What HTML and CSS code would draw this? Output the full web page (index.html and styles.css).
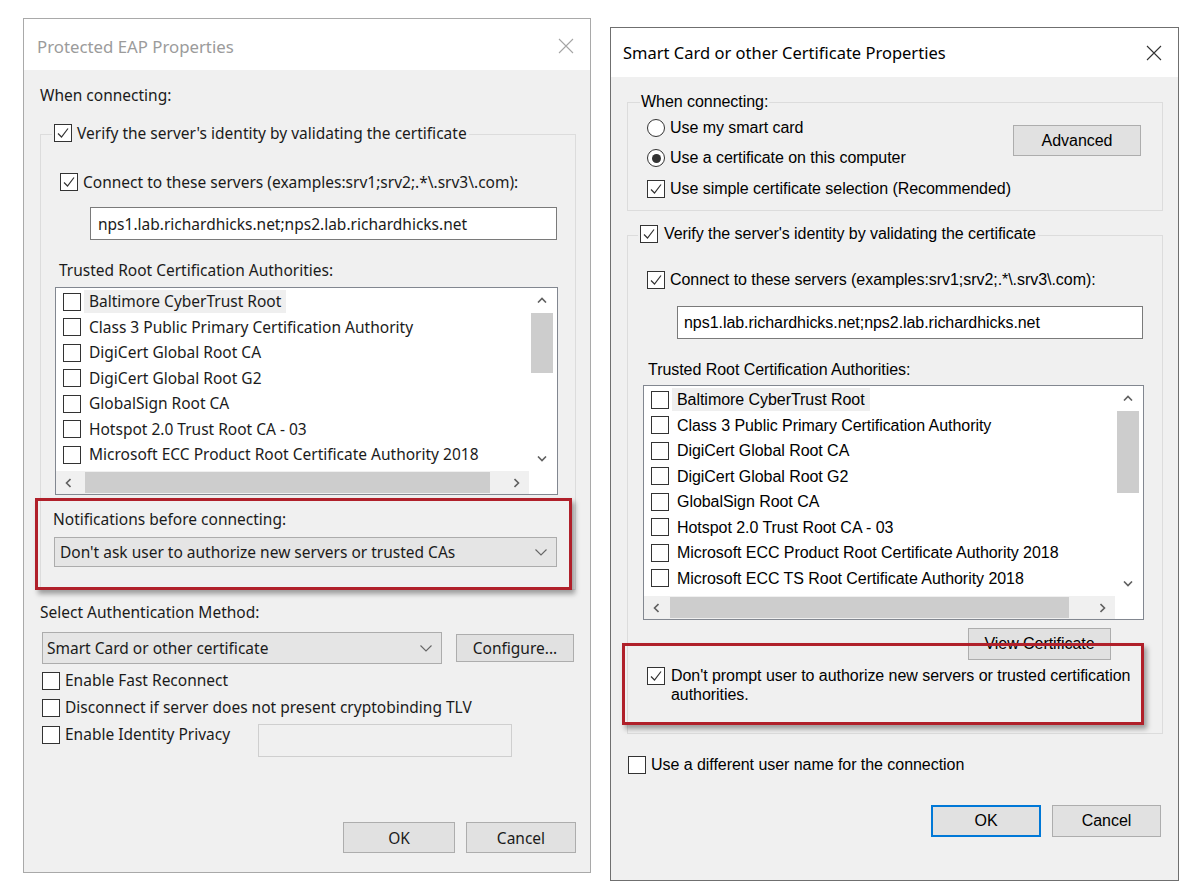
FILE: index.html
```html
<!DOCTYPE html>
<html lang="en">
  <head>
    <meta charset="UTF-8" />
    <title>PEAP and Smart Card Properties</title>
    <link rel="stylesheet" href="styles.css">
  </head>
  <body>
    <div class="page">
      <!-- Protected EAP Properties -->
      <div class="dialog peap">
        <div class="titlebar">
          <span class="title">Protected EAP Properties</span>
          <svg class="close" viewBox="0 0 16 16"><path d="M1 1L15 15M15 1L1 15"/></svg>
        </div>
        <div class="body">
          <div class="p-when">When connecting:</div>
          <div class="group p-group">
            <div class="check legend p-legend"><span class="cb"><svg viewBox="0 0 14 14"><path d="M2 7.5l3.5 3.5 6.5-8.5"/></svg></span>Verify the server's identity by validating the certificate</div>
            <div class="check p-connect"><span class="cb"><svg viewBox="0 0 14 14"><path d="M2 7.5l3.5 3.5 6.5-8.5"/></svg></span>Connect to these servers (examples:srv1;srv2;.*\.srv3\.com):</div>
            <div class="textbox p-servers">nps1.lab.richardhicks.net;nps2.lab.richardhicks.net</div>
            <div class="p-trusted">Trusted Root Certification Authorities:</div>
            <div class="listbox p-list">
              <div class="items">
                <div class="item sel"><span class="cb"></span><span class="txt">Baltimore CyberTrust Root</span></div>
                <div class="item"><span class="cb"></span><span class="txt">Class 3 Public Primary Certification Authority</span></div>
                <div class="item"><span class="cb"></span><span class="txt">DigiCert Global Root CA</span></div>
                <div class="item"><span class="cb"></span><span class="txt">DigiCert Global Root G2</span></div>
                <div class="item"><span class="cb"></span><span class="txt">GlobalSign Root CA</span></div>
                <div class="item"><span class="cb"></span><span class="txt">Hotspot 2.0 Trust Root CA - 03</span></div>
                <div class="item"><span class="cb"></span><span class="txt">Microsoft ECC Product Root Certificate Authority 2018</span></div>
              </div>
              <div class="vscroll">
                <span class="arrow"><svg viewBox="0 0 10 6"><path d="M1 5.5L5 1.5 9 5.5"/></svg></span>
                <span class="thumb"></span>
                <span class="fill"></span>
                <span class="arrow"><svg viewBox="0 0 10 6"><path d="M1 0.5L5 4.5 9 0.5"/></svg></span>
              </div>
              <div class="hscroll">
                <span class="arrow"><svg viewBox="0 0 6 10"><path d="M5.5 1L1.5 5 5.5 9"/></svg></span>
                <span class="thumb"></span>
                <span class="fill"></span>
                <span class="arrow"><svg viewBox="0 0 6 10"><path d="M0.5 1L4.5 5 0.5 9"/></svg></span>
              </div>
              <div class="corner"></div>
            </div>
            <div class="p-notify">Notifications before connecting:</div>
            <div class="select p-notify-select">
              <span>Don't ask user to authorize new servers or trusted CAs</span>
              <svg viewBox="0 0 12 7"><path d="M0.5 0.5L6 6 11.5 0.5"/></svg>
            </div>
          </div>
          <div class="p-method">Select Authentication Method:</div>
          <div class="p-method-row">
            <div class="select p-method-select">
              <span>Smart Card or other certificate</span>
              <svg viewBox="0 0 12 7"><path d="M0.5 0.5L6 6 11.5 0.5"/></svg>
            </div>
            <div class="btn p-configure">Configure...</div>
          </div>
          <div class="check p-opt"><span class="cb"></span>Enable Fast Reconnect</div>
          <div class="check p-opt"><span class="cb"></span>Disconnect if server does not present cryptobinding TLV</div>
          <div class="p-privacy">
            <div class="check p-opt p-privacy-label"><span class="cb"></span>Enable Identity Privacy</div>
            <div class="textbox disabled p-identity"></div>
          </div>
          <div class="footer p-footer">
            <div class="btn p-ok">OK</div>
            <div class="btn p-cancel">Cancel</div>
          </div>
        </div>
        <div class="callout p-callout"></div>
      </div>

      <!-- Smart Card or other Certificate Properties -->
      <div class="dialog smartcard">
        <div class="titlebar">
          <span class="title">Smart Card or other Certificate Properties</span>
          <svg class="close" viewBox="0 0 16 16"><path d="M1 1L15 15M15 1L1 15"/></svg>
        </div>
        <div class="body">
          <div class="group s-group1">
            <div class="legend s-legend1">When connecting:</div>
            <div class="s-when">
              <div class="s-options">
                <div class="check s-radio1"><span class="radio"></span>Use my smart card</div>
                <div class="check s-radio2"><span class="radio on"></span>Use a certificate on this computer</div>
                <div class="check s-simple"><span class="cb"><svg viewBox="0 0 14 14"><path d="M2 7.5l3.5 3.5 6.5-8.5"/></svg></span>Use simple certificate selection (Recommended)</div>
              </div>
              <div class="btn s-advanced">Advanced</div>
            </div>
          </div>
          <div class="group s-group2">
            <div class="check legend s-legend2"><span class="cb"><svg viewBox="0 0 14 14"><path d="M2 7.5l3.5 3.5 6.5-8.5"/></svg></span>Verify the server's identity by validating the certificate</div>
            <div class="check s-connect"><span class="cb"><svg viewBox="0 0 14 14"><path d="M2 7.5l3.5 3.5 6.5-8.5"/></svg></span>Connect to these servers (examples:srv1;srv2;.*\.srv3\.com):</div>
            <div class="textbox s-servers">nps1.lab.richardhicks.net;nps2.lab.richardhicks.net</div>
            <div class="s-trusted">Trusted Root Certification Authorities:</div>
            <div class="listbox s-list">
              <div class="items">
                <div class="item sel"><span class="cb"></span><span class="txt">Baltimore CyberTrust Root</span></div>
                <div class="item"><span class="cb"></span><span class="txt">Class 3 Public Primary Certification Authority</span></div>
                <div class="item"><span class="cb"></span><span class="txt">DigiCert Global Root CA</span></div>
                <div class="item"><span class="cb"></span><span class="txt">DigiCert Global Root G2</span></div>
                <div class="item"><span class="cb"></span><span class="txt">GlobalSign Root CA</span></div>
                <div class="item"><span class="cb"></span><span class="txt">Hotspot 2.0 Trust Root CA - 03</span></div>
                <div class="item"><span class="cb"></span><span class="txt">Microsoft ECC Product Root Certificate Authority 2018</span></div>
                <div class="item"><span class="cb"></span><span class="txt">Microsoft ECC TS Root Certificate Authority 2018</span></div>
              </div>
              <div class="vscroll">
                <span class="arrow"><svg viewBox="0 0 10 6"><path d="M1 5.5L5 1.5 9 5.5"/></svg></span>
                <span class="thumb"></span>
                <span class="fill"></span>
                <span class="arrow"><svg viewBox="0 0 10 6"><path d="M1 0.5L5 4.5 9 0.5"/></svg></span>
              </div>
              <div class="hscroll">
                <span class="arrow"><svg viewBox="0 0 6 10"><path d="M5.5 1L1.5 5 5.5 9"/></svg></span>
                <span class="thumb"></span>
                <span class="fill"></span>
                <span class="arrow"><svg viewBox="0 0 6 10"><path d="M0.5 1L4.5 5 0.5 9"/></svg></span>
              </div>
              <div class="corner"></div>
            </div>
            <div class="btn s-view">View Certificate</div>
            <div class="check s-prompt"><span class="cb"><svg viewBox="0 0 14 14"><path d="M2 7.5l3.5 3.5 6.5-8.5"/></svg></span><span>Don't prompt user to authorize new servers or trusted certification<br>authorities.</span></div>
          </div>
          <div class="check s-different"><span class="cb"></span>Use a different user name for the connection</div>
          <div class="footer s-footer">
            <div class="btn default s-ok">OK</div>
            <div class="btn s-cancel">Cancel</div>
          </div>
        </div>
        <div class="callout s-callout"></div>
      </div>
    </div>
  </body>
</html>
```

FILE: styles.css
```css
* {
  box-sizing: border-box;
}
body {
  margin: 0;
  background: #fff;
  font-family: "Noto Sans", sans-serif;
  color: #1b1b1b;
}
.page {
  display: flex;
  align-items: flex-start;
  width: 1202px;
  height: 895px;
  overflow: hidden;
}

/* dialog frame */
.dialog {
  position: relative;
  display: flex;
  flex-direction: column;
  flex: none;
  background: #f0f0f0;
  border: 1px solid #a9a9a9;
}
.peap {
  width: 568px;
  height: 855px;
  margin: 18px 0 0 23px;
  font-size: 15.5px;
}
.smartcard {
  width: 569px;
  height: 854px;
  margin: 27px 0 0 19px;
  border-color: #6f6f6f;
  font-family: "Liberation Sans", Arial, sans-serif;
  font-size: 16px;
  letter-spacing: -0.05px;
  color: #000;
}
.titlebar {
  display: flex;
  align-items: center;
  justify-content: space-between;
  flex: none;
  background: #fff;
  padding: 0 16px 0 12px;
}
.peap .titlebar {
  height: 51px;
  padding-top: 3px;
}
.smartcard .titlebar {
  height: 49px;
}
.title {
  font-family: "Noto Sans", sans-serif;
  font-size: 16.8px;
  letter-spacing: 0;
}
.peap .title {
  color: #9b9b9b;
  padding-left: 1px;
}
.smartcard .title {
  font-size: 16.5px;
  color: #000;
}
.close {
  width: 16px;
  height: 16px;
  fill: none;
  stroke: #333;
  stroke-width: 1.1;
}
.peap .close {
  stroke: #a5a5a5;
}
.body {
  display: flex;
  flex-direction: column;
  flex: 1;
}

/* controls */
.check {
  display: flex;
  align-items: center;
  gap: 5px;
  line-height: 20px;
  white-space: nowrap;
}
.cb {
  flex: none;
  display: flex;
  align-items: center;
  justify-content: center;
  width: 18px;
  height: 18px;
  border: 1px solid #333;
  background: #fff;
}
.cb svg {
  width: 14px;
  height: 14px;
  fill: none;
  stroke: #333;
  stroke-width: 1.2;
}
.radio {
  flex: none;
  display: flex;
  align-items: center;
  justify-content: center;
  width: 18px;
  height: 18px;
  border: 1px solid #333;
  border-radius: 50%;
  background: #fff;
}
.radio.on::after {
  content: "";
  width: 9px;
  height: 9px;
  border-radius: 50%;
  background: #333;
}
.group {
  border: 1px solid #dcdcdc;
  margin-left: 16px;
  width: 536px;
}
.legend {
  width: fit-content;
  background: #f0f0f0;
  padding: 0 2px;
  margin-top: -12px;
}
.textbox {
  display: flex;
  align-items: center;
  height: 33px;
  padding-left: 7px;
  background: #fff;
  border: 1px solid #7a7a7a;
  white-space: nowrap;
}
.textbox.disabled {
  background: #f0f0f0;
  border-color: #cfcfcf;
}
.select {
  display: flex;
  align-items: center;
  justify-content: space-between;
  background: #e5e5e5;
  border: 1px solid #acacac;
  padding: 0 9px 0 4px;
  white-space: nowrap;
}
.select svg {
  width: 12px;
  height: 7px;
  fill: none;
  stroke: #666;
  stroke-width: 1.1;
}
.btn {
  display: flex;
  align-items: center;
  justify-content: center;
  background: #e1e1e1;
  border: 1px solid #adadad;
  white-space: nowrap;
}
.btn.default {
  border: 2px solid #0078d7;
}
.footer {
  display: flex;
  justify-content: flex-end;
  gap: 11px;
}

/* list box with scroll bars */
.listbox {
  display: grid;
  grid-template-columns: 1fr 28px;
  grid-template-rows: 1fr 23px;
  border: 1px solid #828790;
  background: #fff;
  overflow: hidden;
}
.items {
  overflow: hidden;
  padding: 1px 0 0 7px;
}
.item {
  display: flex;
  align-items: center;
  height: 25.5px;
}
.item .txt {
  margin-left: 3px;
  padding: 0 5px;
  line-height: 23px;
  white-space: nowrap;
}
.item.sel .txt {
  background: #efefef;
}
.vscroll {
  display: flex;
  flex-direction: column;
  align-items: center;
  padding-right: 3px;
  background: #fff;
}
.hscroll {
  display: flex;
  align-items: center;
  background: #f0f0f0;
}
.corner {
  background: #fff;
}
.arrow {
  flex: none;
  display: flex;
  align-items: center;
  justify-content: center;
  width: 24px;
  height: 24px;
}
.vscroll .arrow svg {
  width: 10px;
  height: 6px;
}
.hscroll .arrow svg {
  width: 6px;
  height: 10px;
}
.arrow svg {
  fill: none;
  stroke: #606060;
  stroke-width: 1.6;
}
.thumb {
  flex: none;
  background: #cdcdcd;
}
.vscroll .thumb {
  width: 22px;
}
.hscroll .thumb {
  height: 21px;
}
.fill {
  flex: 1;
}

/* annotation boxes */
.callout {
  position: absolute;
  border: 3px solid #b0202a;
  box-shadow: 3px 4px 5px rgba(0, 0, 0, 0.35);
  pointer-events: none;
}

/* Protected EAP Properties layout */
.p-when {
  margin: 15px 0 0 16px;
  line-height: 20px;
}
.p-group {
  margin-top: 29px;
  padding-bottom: 22px;
}
.p-legend {
  margin-left: 11px;
}
.p-connect {
  margin: 29px 0 0 19px;
}
.p-servers {
  margin: 15px 0 0 49px;
  width: 467px;
}
.p-trusted {
  margin: 20px 0 0 18px;
  line-height: 20px;
}
.p-list {
  margin: 7px 0 0 14px;
  width: 503px;
  height: 208px;
}
.p-list .vscroll .thumb {
  height: 60px;
  margin-top: 1px;
}
.p-list .hscroll .thumb {
  width: 405px;
  margin-left: 5px;
}
.p-notify {
  margin: 14px 0 0 12px;
  line-height: 20px;
}
.p-notify-select {
  margin: 8px 0 0 13px;
  width: 503px;
  height: 30px;
  padding-left: 5px;
}
.p-method {
  margin: 12px 0 0 16px;
  line-height: 20px;
}
.p-method-row {
  display: flex;
  align-items: center;
  margin: 10px 0 0 18px;
}
.p-method-select {
  width: 400px;
  height: 32px;
}
.p-configure {
  width: 118px;
  height: 28px;
  margin-left: 14px;
}
.p-opt {
  margin-left: 18px;
  line-height: 27px;
}
.p-method-row + .p-opt {
  margin-top: 3px;
}
.p-privacy {
  display: flex;
  align-items: flex-start;
}
.p-privacy-label {
  width: 216px;
}
.p-identity {
  width: 254px;
  margin-top: 3px;
}
.p-footer {
  margin-top: 65px;
  padding-right: 14px;
}
.p-ok {
  width: 112px;
  height: 31px;
}
.p-cancel {
  width: 110px;
  height: 31px;
}
.p-callout {
  left: 11px;
  top: 479px;
  width: 537px;
  height: 92px;
}

/* Smart Card or other Certificate Properties layout */
.s-group1 {
  margin-top: 25px;
  padding-bottom: 11px;
}
.s-legend1 {
  margin-left: 12px;
  margin-top: -11px;
  padding: 0 1px;
  line-height: 20px;
}
.s-when {
  display: flex;
  align-items: flex-start;
}
.s-options {
  margin-left: 19px;
}
.s-radio1 {
  margin-top: 6px;
}
.s-radio2 {
  margin-top: 10px;
}
.s-simple {
  margin-top: 11px;
}
.s-advanced {
  width: 128px;
  height: 31px;
  margin: 13px 21px 0 auto;
}
.s-group2 {
  margin-top: 24px;
  padding-bottom: 29px;
}
.s-legend2 {
  margin-left: 10px;
  gap: 6px;
}
.s-connect {
  margin: 26px 0 0 19px;
}
.s-servers {
  margin: 16px 0 0 49px;
  width: 466px;
  padding-left: 6px;
}
.s-trusted {
  margin: 21px 0 0 20px;
  line-height: 20px;
}
.s-list {
  margin: 5px 0 0 15px;
  width: 501px;
  height: 235px;
}
.s-list .vscroll .thumb {
  height: 82px;
  margin-top: 1px;
}
.s-list .hscroll .thumb {
  width: 399px;
  margin-left: 2px;
}
.s-view {
  margin: 8px 0 0 340px;
  width: 143px;
  height: 32px;
}
.s-prompt {
  align-items: flex-start;
  gap: 6px;
  margin: 6px 0 0 19px;
  line-height: 19px;
}
.s-prompt .cb {
  margin-top: 1px;
}
.s-different {
  margin: 21px 0 0 17px;
}
.s-footer {
  margin-top: 30px;
  padding-right: 17px;
}
.s-ok {
  width: 110px;
  height: 32px;
}
.s-cancel {
  width: 109px;
  height: 32px;
}
.s-callout {
  left: 11px;
  top: 615px;
  width: 522px;
  height: 82px;
}
```
